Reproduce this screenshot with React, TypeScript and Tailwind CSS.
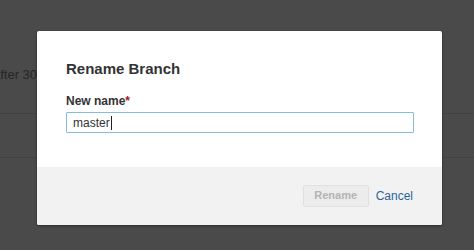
import React from 'react';

const App: React.FC = () => {
  return (
    <div className="relative h-[250px] w-[474px] overflow-hidden bg-[#4a4a4a] font-['Liberation_Sans',Arial,sans-serif]">
      {/* Dimmed page behind the modal */}
      <div className="flex flex-col">
        <div className="h-[114px] border-b border-[#424242] pt-[62px]">
          <span className="-ml-[7px] whitespace-nowrap text-[13px] leading-[16px] text-[#262626]">after 30 days</span>
        </div>
        <div className="h-[44px] border-b border-[#424242]" />
        <div className="h-[92px]" />
      </div>

      {/* Modal */}
      <div className="absolute left-[37px] top-[31px] flex h-[194px] w-[405px] flex-col overflow-hidden rounded-[2px] bg-white shadow-[0_1px_3px_rgba(0,0,0,0.4)]">
        <div className="flex-1 px-[29px] pt-[29px]">
          <h2 className="text-[15px] font-bold leading-[18px] text-[#333]">Rename Branch</h2>
          <label className="mt-[16px] block text-[12px] font-bold leading-[14px] text-[#333]">
            New name<span className="text-[#b0102a]">*</span>
          </label>
          <div className="mt-[4px] flex h-[21px] w-[348px] items-center rounded-[1px] border border-[#84bcd9] bg-white px-[6px] text-[12px] text-[#333]">
            master<span className="ml-[1px] h-[14px] w-[1px] bg-[#222]" />
          </div>
        </div>
        <div className="flex h-[58px] items-center justify-end gap-[7px] bg-[#f2f2f2] pr-[29px] pb-[1px]">
          <button className="h-[22px] w-[66px] rounded-[2px] border border-[#e0e0e0] bg-[#ececec] text-[11px] font-bold text-[#b3b3b3]">
            Rename
          </button>
          <button className="text-[12px] text-[#2a6496]">Cancel</button>
        </div>
      </div>
    </div>
  );
};

export default App;
